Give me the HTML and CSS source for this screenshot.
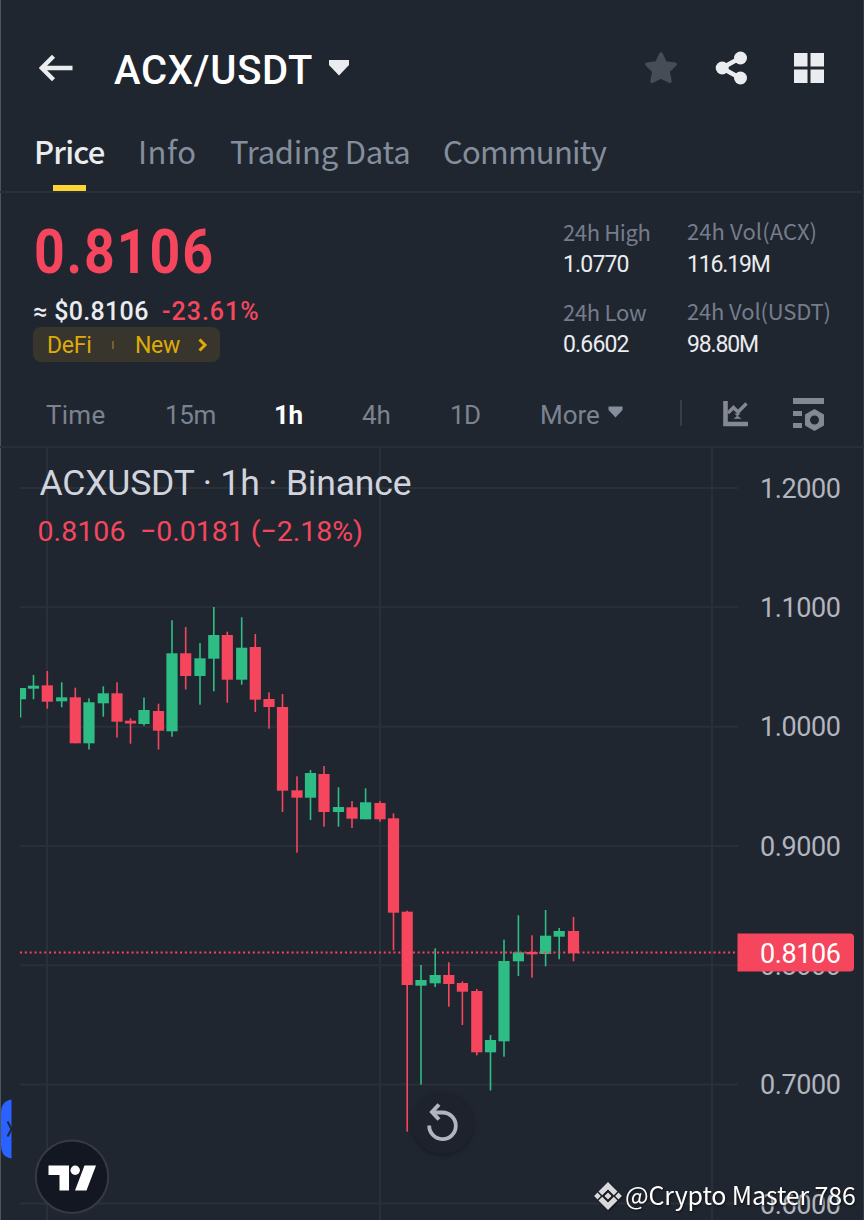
FILE: index.html
```html
<!DOCTYPE html>
<html lang="en">
<head>
<meta charset="utf-8">
<title>ACX/USDT</title>
<link rel="stylesheet" href="styles.css">
</head>
<body>
<main class="screen">
  <header class="topbar">
    <svg class="back" width="34" height="28" viewBox="0 0 34 28"><path d="M33.500 14H4M14.500 2.300 2.800 14 14.500 25.700" fill="none" stroke="#eaecef" stroke-width="4.400"/></svg>
    <h1 class="pair"><span data-width="199">ACX/USDT</span></h1>
    <svg class="caret" width="22" height="17" viewBox="0 0 22 17"><path d="M1 0H21V5L11 15.500 1 5Z" fill="#eaecef"/></svg>
    <div class="actions">
      <svg width="34" height="34" viewBox="0 0 34 34"><path d="M17 3 21.300 12 31.200 13.300 24 20.300 26 30.400 17 25.900 8 30.400 10 20.300 2.800 13.300 12.700 12Z" fill="#474d57" stroke="#474d57" stroke-width="3.500" stroke-linejoin="round"/></svg>
      <svg width="34" height="34" viewBox="0 0 34 34"><g fill="#eaecef"><path d="M7 17 25 7M7 17 25 27" stroke="#eaecef" stroke-width="4.500"/><circle cx="7.200" cy="17" r="6.500"/><circle cx="25.500" cy="7" r="6.500"/><circle cx="25.500" cy="27" r="6.500"/></g></svg>
      <svg width="30" height="30" viewBox="0 0 30 30"><path d="M0 0H13.500V13.500H0ZM16.500 0H30V13.500H16.500ZM0 16.500H13.500V30H0ZM16.500 16.500H30V30H16.500Z" fill="#eaecef"/></svg>
    </div>
  </header>

  <nav class="tabs">
    <a class="tab active"><span data-width="70">Price</span></a>
    <a class="tab"><span data-width="59">Info</span></a>
    <a class="tab"><span data-width="180">Trading Data</span></a>
    <a class="tab"><span data-width="163">Community</span></a>
  </nav>

  <section class="summary">
    <div class="quote">
      <div class="last"><span data-width="206">0.8106</span></div>
      <div class="fiat"><span data-width="116">≈ $0.8106</span><span class="down" data-width="98">-23.61%</span></div>
      <div class="tags"><span data-width="45">DeFi</span><i class="tick"></i><span data-width="45">New</span><svg width="10" height="14" viewBox="0 0 10 14"><path d="M1.500 1.500 7 7 1.500 12.500" fill="none" stroke="#dfaa08" stroke-width="3"/></svg></div>
    </div>
    <dl class="stats">
      <div class="stat"><dt><span data-width="88">24h High</span></dt><dd><span data-width="66">1.0770</span></dd></div>
      <div class="stat"><dt><span data-width="130">24h Vol(ACX)</span></dt><dd><span data-width="83">116.19M</span></dd></div>
      <div class="stat"><dt><span data-width="83">24h Low</span></dt><dd><span data-width="66">0.6602</span></dd></div>
      <div class="stat"><dt><span data-width="144">24h Vol(USDT)</span></dt><dd><span data-width="71">98.80M</span></dd></div>
    </dl>
  </section>

  <nav class="intervals">
    <span data-width="59">Time</span><span data-width="51">15m</span><b data-width="28">1h</b><span data-width="29">4h</span><span data-width="31">1D</span>
    <span class="more"><span data-width="60">More</span><svg width="15" height="12" viewBox="0 0 15 12"><path d="M.500 .500H14.500V4L7.500 11.500 .500 4Z" fill="#848e9c"/></svg></span>
    <i class="divider"></i>
    <svg width="26" height="26" viewBox="0 0 26 26"><path d="M2.500 0V23H25" fill="none" stroke="#848892" stroke-width="4.600"/><path d="M5 12 10.500 6.500 15 11 23.500 2.500" fill="none" stroke="#848892" stroke-width="3.400"/><path d="M11.500 12.500H17.500L14.800 15 18.500 17.800H10.500L14 15Z" fill="#848892"/></svg>
    <svg class="settings" width="31" height="33" viewBox="0 0 31 33"><path d="M0 0H31V6H0ZM0 13H9V18H0ZM0 25H9V30H0Z" fill="#848892"/><path fill-rule="evenodd" d="M21.500 11 31 16.500V27.500L21.500 33 12 27.500V16.500ZM21.500 17.500A4.500 4.500 0 1 0 21.500 26.500A4.500 4.500 0 1 0 21.500 17.500Z" fill="#848892"/></svg>
  </nav>

  <section class="chart">
    <svg class="plot" id="plot" viewBox="0 448 864 772" width="864" height="772">
      <g class="grid">
        <path d="M47 448V1220M380 448V1220M712 448V1220M20 488H738M20 607.300H738M20 726.700H738M20 846H738M20 965.300H738M20 1084.600H738M20 1203.500H738"/>
      </g>
      <g class="axis">
        <text x="760" y="498" textLength="81">1.2000</text>
        <text x="760" y="617" textLength="81">1.1000</text>
        <text x="760" y="736.300" textLength="81">1.0000</text>
        <text x="760" y="855.700" textLength="81">0.9000</text>
        <text x="760" y="975" textLength="81">0.8000</text>
        <text x="760" y="1094.300" textLength="81">0.7000</text>
        <text x="760" y="1213.600" textLength="81">0.6000</text>
      </g>
      <g id="candles"></g>
      <path class="lastline" d="M20 952.500H738"/>
      <path d="M737.500 933.500H850Q854 933.500 854 937.500V967.500Q854 971.500 850 971.500H737.500Z" fill="#f6465d"/>
      <text class="lastlabel" x="760" y="962.500" textLength="81">0.8106</text>
      <text class="symbol" x="39.500" y="495.300" textLength="372">ACXUSDT · 1h · Binance</text>
      <text class="change" x="37.500" y="541" textLength="88">0.8106</text>
      <text class="change" x="140" y="541" textLength="223">−0.0181 (−2.18%)</text>
      <g>
        <circle class="resetbtn" cx="442.500" cy="1123" r="31"/>
        <path d="M429.200 1125.500A13.300 13.300 0 1 0 442.500 1112.500H434" fill="none" stroke="#b2b5be" stroke-width="3.800"/>
        <path d="M439 1104.500 432 1112 439 1119.500" fill="none" stroke="#b2b5be" stroke-width="4"/>
      </g>
      <path d="M11.500 1099.500V1158.500Q1 1157 1 1145V1113Q1 1101 11.500 1099.500Z" fill="#2962ff"/>
      <path d="M7.500 1121.500 11.500 1129 7.500 1136.500" fill="none" stroke="#202630" stroke-width="2"/>
      <circle cx="72" cy="1176.700" r="36.200" fill="#131722" stroke="#363a45" stroke-width="2"/>
      <path d="M48.500 1165.500H69V1190.500H59.500V1175H48.500ZM84.500 1165.500H96L86.500 1190.500H75Z" fill="#fff"/>
      <circle cx="75.200" cy="1170.200" r="4.700" fill="#fff"/>
      <g class="mark" fill="#d8d9db">
        <path d="M598.500 1191.500 608 1182 617.500 1191.500 613.800 1195.200 608 1189.400 602.200 1195.200ZM598.500 1200.500 602.200 1196.800 608 1202.600 613.800 1196.800 617.500 1200.500 608 1210Z"/>
        <path d="M608 1192.400 611.600 1196 608 1199.600 604.400 1196ZM597.500 1192.600 600.900 1196 597.500 1199.400 594.100 1196ZM618.500 1192.600 621.900 1196 618.500 1199.400 615.100 1196Z"/>
        <text class="author" x="625" y="1204.800" textLength="231">@Crypto Master 786</text>
      </g>
    </svg>
  </section>
</main>
<script src="app.js"></script>
</body>
</html>
```
FILE: styles.css
```css
* { box-sizing: border-box; }
body {
  margin: 0;
  background: #202630;
  color: #eaecef;
  font-family: Roboto, "Noto Sans", sans-serif;
}
.screen {
  width: 864px;
  height: 1220px;
  overflow: hidden;
  box-shadow: inset 1px 0 #4f535b, inset -1px 0 #343a44;
}
svg { display: block; flex: none; }
span, b { white-space: nowrap; }
[data-width] { display: block; flex: none; }
.topbar {
  display: flex;
  align-items: center;
  height: 110px;
  padding: 26px 40px 0 39px;
}
.pair {
  margin: 0 0 0 41px;
  color: #fff;
  font-size: 40px;
  font-weight: 500;
  line-height: 50px;
  padding-top: 5px;
}
.caret { margin-left: 15px; }
.actions {
  display: flex;
  align-items: center;
  gap: 37px;
  margin-left: auto;
}
.actions svg:last-child { margin-left: 8px; }
.tabs {
  display: flex;
  gap: 33px;
  height: 83px;
  padding-left: 34px;
  border-bottom: 2px solid #292f39;
  font-family: "Noto Sans CJK SC", "Noto Sans", sans-serif;
  font-size: 31px;
  line-height: 82px;
  color: #848e9c;
}
.tab { display: flex; flex-direction: column; align-items: center; }
.tab:nth-child(2) { margin-left: 1px; }
.active { color: #eaecef; font-weight: 500; }
.active::after {
  content: "";
  width: 33px;
  height: 7px;
  margin-top: -7px;
  background: #fcd535;
}
.summary {
  display: flex;
  height: 187px;
  padding-left: 33px;
}
.quote { width: 530px; padding-top: 26px; }
.last {
  width: 206px;
  height: 66px;
  padding-left: 1px;
  color: #f6465d;
  font-size: 61px;
  font-weight: 700;
  line-height: 66px;
  transform: scaleX(.88);
  transform-origin: left;
}
.fiat {
  display: flex;
  gap: 13px;
  height: 42px;
  font-size: 25px;
  font-weight: 500;
  line-height: 54px;
}
.down { color: #f6465d; }
.tags {
  display: flex;
  align-items: center;
  width: 187px;
  height: 35px;
  padding: 1px 0 0 14px;
  border-radius: 8px;
  background: #38352c;
  color: #dfaa08;
  font-size: 23px;
}
.tick { width: 2px; height: 8px; margin: 0 21px 0 20px; background: #75602a; }
.tags svg { margin-left: 18px; }
.stats {
  display: grid;
  grid-template-columns: 124px 160px;
  grid-auto-rows: 80px;
  margin: 0;
  padding-top: 22px;
}
dt {
  height: 34px;
  color: #757d8b;
  font-family: "Noto Sans CJK SC", "Noto Sans", sans-serif;
  font-size: 22px;
  line-height: 32px;
}
.stat:nth-child(even) dt { line-height: 31px; }
dd { margin: 0; font-size: 23px; line-height: 31px; }
.intervals {
  display: flex;
  align-items: center;
  height: 68px;
  padding: 4px 0 2px 46px;
  border-bottom: 2px solid #292f39;
  color: #7b8391;
  font-size: 26px;
}
.intervals > [data-width] { padding-top: 2px; }
.intervals > :nth-child(2) { margin-left: 60px; }
.intervals > :nth-child(3) { margin-left: 58px; color: #fff; }
.intervals > :nth-child(4) { margin-left: 60px; }
.intervals > :nth-child(5) { margin-left: 59px; }
.more { display: flex; align-items: center; gap: 8px; margin-left: 59px; padding-top: 2px; }
.more svg { margin-top: -6px; }
.divider { width: 2px; height: 26px; margin: -2px 41px 0 57px; background: #363d47; }
.settings { margin-left: 44px; }
.grid path { fill: none; stroke: #2a303a; stroke-width: 2; }
.axis text { fill: #b2b5be; font-size: 27px; }
.lastlabel { fill: #fff; font-size: 27px; }
.lastline { stroke: #f6465d; stroke-width: 2; stroke-dasharray: 2 2.850; }
.symbol { fill: #d1d4dc; font-size: 35.500px; }
.change { fill: #f6465d; font-size: 28.500px; }
.resetbtn { fill: #1e222d; filter: drop-shadow(0 2px 2px #171b24); }
.author {
  fill: #fff;
  font-family: "Noto Sans CJK SC", "Noto Sans", sans-serif;
  font-size: 25px;
}
.mark { filter: drop-shadow(1px 1px 1px #111); }
.up { fill: #2ebd85; }
.dn { fill: #f6465d; }
```
FILE: app.js
```js
document.querySelectorAll("[data-width]").forEach(function (el) {
  el.style.width = "max-content";
  var natural = el.offsetWidth;
  var target = Number(el.dataset.width);
  el.style.letterSpacing = (target - natural) / el.textContent.length + "px";
  el.style.width = target + "px";
});

// [x centre, direction, wick top, wick bottom, body top, body bottom]
var candles = [
  [20.5,1,688,717.5,688,699.3],[33.5,1,675,699.3,685.7,688.7],[47.3,0,671,708.7,685.3,701.7],
  [61.7,1,682.3,707.3,697.3,701.3],[75.3,0,687.7,743.3,697.3,743.3],[89,1,698.3,749.5,702.3,743.3],
  [103.3,1,686.3,716.7,693.3,703.3],[117,0,682.3,737.5,693.3,721.7],[130.5,0,718.3,743.7,720.7,723.5],
  [144,1,697.5,725.7,710,724],[158.5,0,703.7,749.5,711,730.7],[172,1,620.3,736.7,653.3,731.3],
  [185.7,0,627,689.5,653.3,676],[200,1,643,704.7,658.3,676],[213.8,1,607,691.3,635,658.7],
  [227.3,0,631.7,702.7,635,679.7],[241.7,1,617.3,684.7,647.7,679.7],[255.3,0,634,712,647,699.7],
  [269,0,692.3,728.7,699,707],[282.5,0,694,812,707,790.7],[297,0,776.3,852.7,790.3,797.7],
  [310.5,1,770,820,773,797.7],[324,0,766,826.7,774,812],[338.5,1,787.3,826.7,807,812],
  [352,0,801,828,807.3,818.7],[365.6,1,788.3,819.3,802.3,819.3],[380,0,801,821.7,803,819.3],
  [393.5,0,813.3,950.3,818.3,912.7],[407.2,0,910.7,1131.7,911.7,985],[421,1,965,1084.7,980,985.7],
  [435.2,1,948.3,987,975,983.3],[448.8,0,962.3,1006.7,975,984],[462.4,0,981.3,1025,983,991.7],
  [476.8,0,989,1055.3,991,1052.3],[490.5,1,1035,1090.5,1040,1052.3],[504,1,939.7,1056.7,961,1041.3],
  [518.4,1,915.3,976,952.3,961.3],[532,0,935.3,977.7,952,954.3],[545.6,1,910,966.3,935.7,954],
  [559.2,1,928,959.3,931,936.7],[573.5,0,917,961.3,931,953.3]
];
var layer = document.getElementById("candles");
candles.forEach(function (c) {
  function bar(x, y, w, h) {
    var r = document.createElementNS("http://www.w3.org/2000/svg", "rect");
    var left = Math.max(x, 20);
    r.setAttribute("x", left);
    r.setAttribute("y", y);
    r.setAttribute("width", w - (left - x));
    r.setAttribute("height", h);
    r.setAttribute("class", c[1] ? "up" : "dn");
    layer.appendChild(r);
  }
  bar(c[0] - 0.8, c[2], 1.6, c[3] - c[2]);
  bar(c[0] - 5.6, c[4], 11.2, c[5] - c[4]);
});
```
